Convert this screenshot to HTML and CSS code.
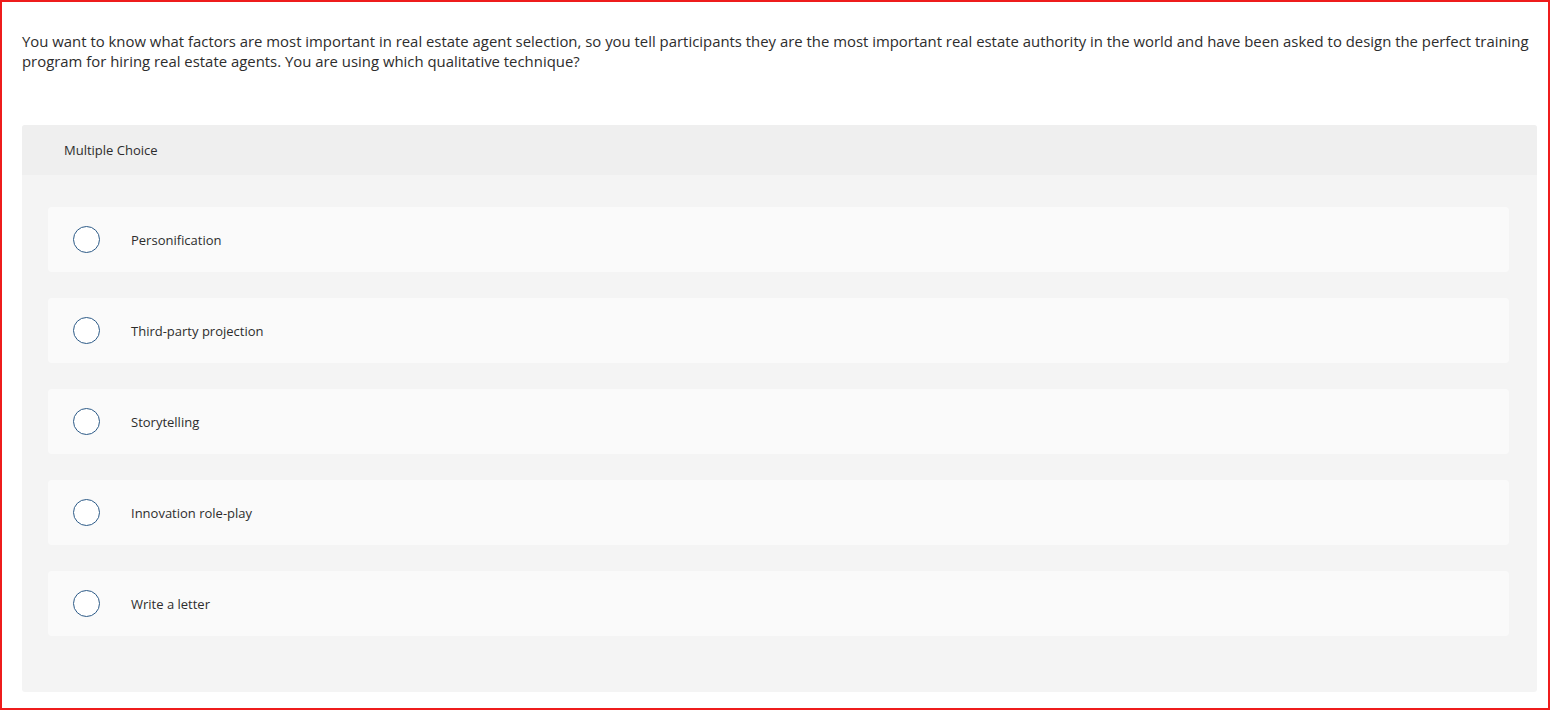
FILE: index.html
```html
<!DOCTYPE html>
<html>
<head>
<meta charset="utf-8">
<link rel="stylesheet" href="styles.css">
</head>
<body>
<div class="frame">
  <div class="content">
    <p class="question">You want to know what factors are most important in real estate agent selection, so you tell participants they are the most important real estate authority in the world and have been asked to design the perfect training program for hiring real estate agents. You are using which qualitative technique?</p>
    <div class="panel">
      <div class="panel-head">Multiple Choice</div>
      <div class="panel-body">
        <div class="option"><span class="radio"></span><span class="label">Personification</span></div>
        <div class="option"><span class="radio"></span><span class="label">Third-party projection</span></div>
        <div class="option"><span class="radio"></span><span class="label">Storytelling</span></div>
        <div class="option"><span class="radio"></span><span class="label">Innovation role-play</span></div>
        <div class="option"><span class="radio"></span><span class="label">Write a letter</span></div>
      </div>
    </div>
  </div>
</div>
</body>
</html>
```
FILE: styles.css
```css
html, body {
  margin: 0;
  padding: 0;
  background: #ffffff;
}
.frame {
  width: 1550px;
  height: 710px;
  box-sizing: border-box;
  border: 2px solid #ee1c1c;
  overflow: hidden;
}
.content {
  padding: 29px 11px 0 20px;
}
.question {
  margin: 0;
  font-family: "Open Sans", sans-serif;
  font-size: 14.9px;
  line-height: 20px;
  color: #2d2d2d;
}
.panel {
  margin-top: 54px;
  border-radius: 3px;
  overflow: hidden;
  background: #f4f4f4;
}
.panel-head {
  height: 50px;
  background: #efefef;
  display: flex;
  align-items: center;
  padding-left: 42px;
  font-family: "Open Sans", sans-serif;
  font-size: 13px;
  color: #2d2d2d;
}
.panel-body {
  padding: 32px 28px 56px 26px;
  display: flex;
  flex-direction: column;
  gap: 26px;
}
.option {
  height: 65px;
  background: #fafafa;
  border-radius: 4px;
  display: flex;
  align-items: center;
  padding-left: 25px;
}
.radio {
  width: 25px;
  height: 25px;
  border: 1.6px solid #2c5a87;
  border-radius: 50%;
  background: #ffffff;
  flex: none;
}
.label {
  margin-left: 31px;
  font-family: "Open Sans", sans-serif;
  font-size: 13px;
  color: #2d2d2d;
}
```
